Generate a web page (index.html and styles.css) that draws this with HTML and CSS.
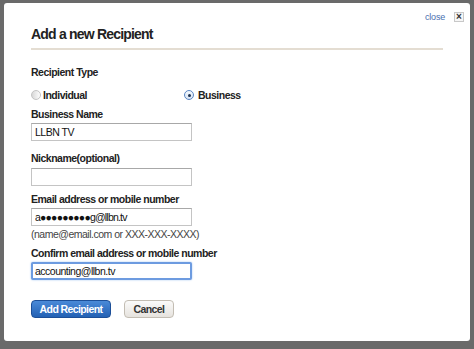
FILE: index.html
```html
<!DOCTYPE html>
<html lang="en">
  <head>
    <meta charset="UTF-8" />
    <title>Add a new Recipient</title>
    <link rel="stylesheet" href="styles.css">
  </head>
  <body>
    <div class="dialog">
      <div class="close-area">
        <a class="close-link" href="#">close</a>
        <span class="close-box">&#215;</span>
      </div>
      <h1>Add a new Recipient</h1>
      <form id="recipientForm">
        <div class="label type-label">Recipient Type</div>
        <div class="radio-row">
          <label class="radio-item individual">
            <span class="radio"></span>Individual
          </label>
          <label class="radio-item business">
            <span class="radio checked"></span>Business
          </label>
        </div>
        <div class="label first">Business Name</div>
        <input class="field" type="text" value="LLBN TV" />
        <div class="label gap10">Nickname(optional)</div>
        <input class="field nick" type="text" value="" />
        <div class="label gap6">Email address or mobile number</div>
        <input class="field masked" type="text" value="a&#9679;&#9679;&#9679;&#9679;&#9679;&#9679;&#9679;&#9679;&#9679;g@llbn.tv" />
        <div class="hint">(name@email.com or XXX-XXX-XXXX)</div>
        <div class="label gap5">Confirm email address or mobile number</div>
        <input class="field focused" type="text" value="accounting@llbn.tv" />
        <div class="buttons">
          <button type="submit" class="btn primary">Add Recipient</button>
          <button type="button" class="btn secondary">Cancel</button>
        </div>
      </form>
    </div>
  </body>
</html>
```

FILE: styles.css
```css
body {
  margin: 0;
  height: 349px;
  padding-top: 3px;
  box-sizing: border-box;
  background-color: #6a6a6a;
  font-family: "Liberation Sans", Arial, sans-serif;
  overflow: hidden;
}

.dialog {
  position: relative;
  margin: 0 4px;
  height: 338px;
  box-sizing: border-box;
  padding: 22px 27px 0;
  background-color: white;
  border-radius: 3px;
  letter-spacing: -0.5px;
}

.close-area {
  position: absolute;
  top: 9px;
  right: 6px;
  display: flex;
  align-items: center;
  gap: 9px;
}

.close-link {
  font-size: 9px;
  letter-spacing: -0.2px;
  color: #4a6fb0;
  text-decoration: none;
}

.close-box {
  width: 8px;
  height: 8px;
  border: 1px solid #c8c8c8;
  background-color: #f6f6f6;
  font-size: 10px;
  line-height: 7px;
  letter-spacing: 0;
  text-align: center;
  color: #333;
  font-weight: bold;
}

h1 {
  margin: 0;
  padding-bottom: 5px;
  font-size: 14px;
  line-height: 18px;
  letter-spacing: -0.8px;
  font-weight: bold;
  color: #222;
  border-bottom: 2px solid #e4ddd2;
}

.label {
  font-size: 10.5px;
  line-height: 14px;
  font-weight: bold;
  color: #222;
  margin-bottom: 2px;
}

.type-label {
  margin-top: 15px;
}

.radio-row {
  display: flex;
  margin-top: 9px;
  height: 14px;
  font-size: 10.5px;
  line-height: 14px;
  font-weight: bold;
  color: #222;
}

.radio-item {
  display: flex;
  align-items: center;
  gap: 2px;
}

.individual {
  width: 153px;
}

.radio {
  width: 8px;
  height: 8px;
  border-radius: 50%;
  border: 1px solid #c4c4c4;
  background: linear-gradient(90deg, #d8d8d8, #fdfdfd);
  position: relative;
}

.radio.checked {
  border-color: #5b86c4;
  background: linear-gradient(#f4f8fd, #d8e4f4);
  margin-right: 2px;
}

.radio.checked::after {
  content: "";
  position: absolute;
  left: 2.5px;
  top: 2.5px;
  width: 3px;
  height: 3px;
  border-radius: 50%;
  background-color: #1c3050;
}

.first {
  margin-top: 5px;
}

.gap10 {
  margin-top: 10px;
  margin-bottom: 3px;
}

.gap6 {
  margin-top: 6px;
}

.gap5 {
  margin-top: 5px;
}

.field {
  display: block;
  width: 161px;
  height: 18px;
  box-sizing: border-box;
  margin: 0;
  padding: 0 3px;
  border: 1px solid #c4c4c4;
  border-top-color: #a8a8a8;
  font-family: "Liberation Sans", Arial, sans-serif;
  font-size: 10.5px;
  letter-spacing: -0.5px;
  color: #111;
  background-color: white;
  outline: none;
}

.field.masked {
  letter-spacing: -0.8px;
}

.field.focused {
  border: 2px solid #6d9be0;
  border-radius: 2px;
  padding: 0 2px;
  box-shadow: 0 0 2px #9cc0ef;
}

.hint {
  margin-top: 1px;
  font-size: 10.5px;
  line-height: 14px;
  color: #444;
}

.buttons {
  display: flex;
  align-items: center;
  gap: 13px;
  margin-top: 20px;
}

.btn {
  height: 18px;
  padding: 0;
  border-radius: 4px;
  font-family: "Liberation Sans", Arial, sans-serif;
  font-size: 10.5px;
  letter-spacing: -0.6px;
  font-weight: bold;
  cursor: pointer;
}

.btn.primary {
  width: 80px;
  color: white;
  border: 1px solid #1c4f98;
  background: linear-gradient(#4a8ad8, #2361b4);
}

.btn.secondary {
  width: 50px;
  color: #333;
  border: 1px solid #c3bdb3;
  background: linear-gradient(#fbfbfa, #e6e3de);
}
```
